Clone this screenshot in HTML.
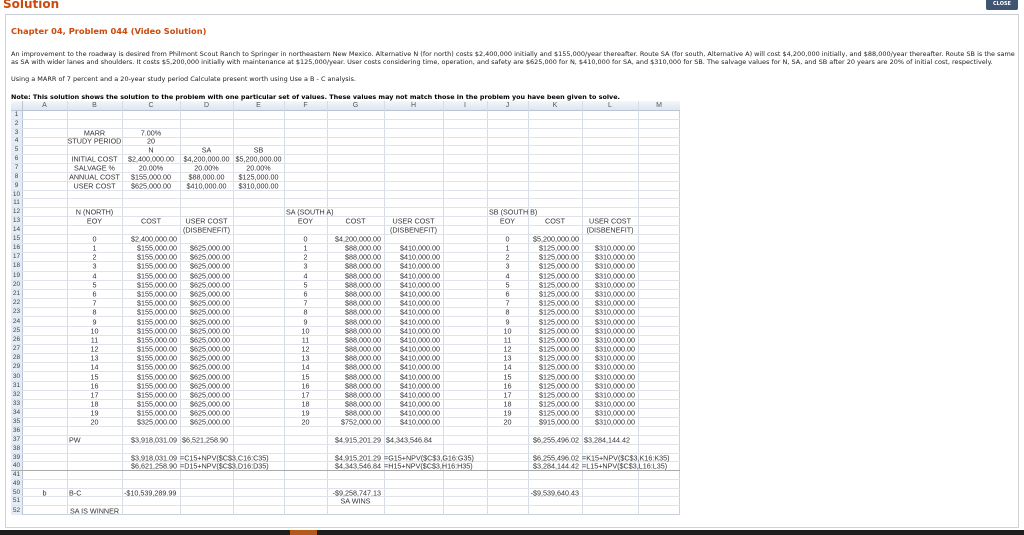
<!DOCTYPE html>
<html><head><meta charset="utf-8"><style>
*{margin:0;padding:0;box-sizing:border-box}
body{width:1024px;height:535px;overflow:hidden;background:#fff;position:relative;font-family:"Liberation Sans",Arial,sans-serif}
.sol{position:absolute;left:3px;top:-3px;font:bold 12px "DejaVu Sans",sans-serif;color:#cc4a0c}
.close{position:absolute;left:986px;top:0;width:32px;height:10px;background:#3f5672;border-radius:0 0 2px 2px;color:#fff;font:bold 5px "DejaVu Sans",sans-serif;text-align:center;line-height:9px}
.panel{position:absolute;left:5px;top:14px;width:1014px;height:514px;border:1px solid #cfd3d8;border-top:1px solid #c9ccd0}
.t{position:absolute;white-space:nowrap;font-family:"DejaVu Sans",Verdana,sans-serif;color:#222}
.h1{left:11px;top:26px;font-size:8.3px;font-weight:bold;color:#cc4a0c}
.p{font-size:6.5px;left:11px}
.note{left:11px;top:93px;font-size:6.4px;font-weight:bold;color:#000}
.bar{position:absolute;left:0;top:530px;width:1024px;height:5px;background:#1e1e1e}
.bar i{position:absolute;left:290px;top:0;width:27px;height:5px;background:#b35a18}
.grid{position:absolute;left:11px;top:101px;width:669px;height:414px;border:1px solid #c8d0dc}
.v{position:absolute;top:101px;height:414px;width:1px;background:#d6dce6}
.hdr{position:absolute;left:11px;top:101px;width:669px;height:10px;background:linear-gradient(#f3f6fa,#dfe6ef);border-bottom:1px solid #b9c4d4}
.rh{position:absolute;left:11px;top:111px;width:11px;height:404px;background:#e6edf6}
.row{position:absolute;left:11px;width:669px;border-bottom:1px solid #dfe3ea;font-size:7.2px;color:#333}
.row span{position:absolute;top:50%;transform:translateY(-50%);white-space:nowrap;line-height:1}
.n{left:0;width:11px;text-align:center;font-size:6.5px;color:#444}
.hdr span{position:absolute;top:1px;font-size:7px;color:#555;text-align:center}
.A{left:11px;width:45px}.B{left:56px;width:55px}.C{left:111px;width:58px}.D{left:169px;width:53px}
.E{left:222px;width:51px}.F{left:273px;width:43px}.G{left:316px;width:57px}.H{left:373px;width:59px}
.I{left:432px;width:44px}.J{left:476px;width:41px}.K{left:517px;width:54px}.L{left:571px;width:56px}.M{left:627px;width:42px}
.c{text-align:center}.r{text-align:right;padding-right:3px}.l{text-align:left;padding-left:2px}
</style></head><body>
<div class="sol">Solution</div>
<div class="close">CLOSE</div>
<div class="panel"></div>
<div class="t h1">Chapter 04, Problem 044 (Video Solution)</div>
<div class="t p" style="top:50px">An improvement to the roadway is desired from Philmont Scout Ranch to Springer in northeastern New Mexico. Alternative N (for north) costs $2,400,000 initially and $155,000/year thereafter. Route SA (for south, Alternative A) will cost $4,200,000 initially, and $88,000/year thereafter. Route SB is the same</div>
<div class="t p" style="top:58px">as SA with wider lanes and shoulders. It costs $5,200,000 initially with maintenance at $125,000/year. User costs considering time, operation, and safety are $625,000 for N, $410,000 for SA, and $310,000 for SB. The salvage values for N, SA, and SB after 20 years are 20% of initial cost, respectively.</div>
<div class="t p" style="top:75px">Using a MARR of 7 percent and a 20-year study period Calculate present worth using Use a B - C analysis.</div>
<div class="t note">Note: This solution shows the solution to the problem with one particular set of values. These values may not match those in the problem you have been given to solve.</div>

<div class="grid"></div>
<div class="rh"></div>
<div class="hdr"><span class="A">A</span><span class="B">B</span><span class="C">C</span><span class="D">D</span><span class="E">E</span><span class="F">F</span><span class="G">G</span><span class="H">H</span><span class="I">I</span><span class="J">J</span><span class="K">K</span><span class="L">L</span><span class="M">M</span></div>
<div class="v" style="left:22px;background:#b9c4d4"></div>
<div class="v" style="left:67px"></div><div class="v" style="left:122px"></div><div class="v" style="left:180px"></div><div class="v" style="left:233px"></div><div class="v" style="left:284px"></div><div class="v" style="left:327px"></div><div class="v" style="left:384px"></div><div class="v" style="left:443px"></div><div class="v" style="left:487px"></div><div class="v" style="left:528px"></div><div class="v" style="left:582px"></div><div class="v" style="left:638px"></div>

<div class="row" style="top:111px;height:8.85px"><span class="n">1</span></div>
<div class="row" style="top:119.85px;height:8.85px"><span class="n">2</span></div>
<div class="row" style="top:128.7px;height:8.85px"><span class="n">3</span><span class="B c">MARR</span><span class="C c">7.00%</span></div>
<div class="row" style="top:137.55px;height:8.85px"><span class="n">4</span><span class="B c">STUDY PERIOD</span><span class="C c">20</span></div>
<div class="row" style="top:146.4px;height:8.85px"><span class="n">5</span><span class="C c">N</span><span class="D c">SA</span><span class="E c">SB</span></div>
<div class="row" style="top:155.25px;height:8.85px"><span class="n">6</span><span class="B c">INITIAL COST</span><span class="C c">$2,400,000.00</span><span class="D c">$4,200,000.00</span><span class="E c">$5,200,000.00</span></div>
<div class="row" style="top:164.1px;height:8.85px"><span class="n">7</span><span class="B c">SALVAGE %</span><span class="C c">20.00%</span><span class="D c">20.00%</span><span class="E c">20.00%</span></div>
<div class="row" style="top:172.95px;height:8.85px"><span class="n">8</span><span class="B c">ANNUAL COST</span><span class="C c">$155,000.00</span><span class="D c">$88,000.00</span><span class="E c">$125,000.00</span></div>
<div class="row" style="top:181.8px;height:8.85px"><span class="n">9</span><span class="B c">USER COST</span><span class="C c">$625,000.00</span><span class="D c">$410,000.00</span><span class="E c">$310,000.00</span></div>
<div class="row" style="top:190.65px;height:8.85px"><span class="n">10</span></div>
<div class="row" style="top:199.5px;height:8.85px"><span class="n">11</span></div>
<div class="row" style="top:208.35px;height:8.85px"><span class="n">12</span><span class="B c">N (NORTH)</span><span class="F l">SA (SOUTH A)</span><span class="J l">SB (SOUTH B)</span></div>
<div class="row" style="top:217.2px;height:8.85px"><span class="n">13</span><span class="B c">EOY</span><span class="C c">COST</span><span class="D c">USER COST</span><span class="F c">EOY</span><span class="G c">COST</span><span class="H c">USER COST</span><span class="J c">EOY</span><span class="K c">COST</span><span class="L c">USER COST</span></div>
<div class="row" style="top:226.05px;height:8.85px"><span class="n">14</span><span class="D c">(DISBENEFIT)</span><span class="H c">(DISBENEFIT)</span><span class="L c">(DISBENEFIT)</span></div>
<div class="row" style="top:234.9px;height:9.17px"><span class="n">15</span><span class="B c">0</span><span class="C r">$2,400,000.00</span><span class="F c">0</span><span class="G r">$4,200,000.00</span><span class="J c">0</span><span class="K r">$5,200,000.00</span></div>
<div class="row" style="top:244.07px;height:9.17px"><span class="n">16</span><span class="B c">1</span><span class="C r">$155,000.00</span><span class="D r">$625,000.00</span><span class="F c">1</span><span class="G r">$88,000.00</span><span class="H r">$410,000.00</span><span class="J c">1</span><span class="K r">$125,000.00</span><span class="L r">$310,000.00</span></div>
<div class="row" style="top:253.24px;height:9.17px"><span class="n">17</span><span class="B c">2</span><span class="C r">$155,000.00</span><span class="D r">$625,000.00</span><span class="F c">2</span><span class="G r">$88,000.00</span><span class="H r">$410,000.00</span><span class="J c">2</span><span class="K r">$125,000.00</span><span class="L r">$310,000.00</span></div>
<div class="row" style="top:262.41px;height:9.17px"><span class="n">18</span><span class="B c">3</span><span class="C r">$155,000.00</span><span class="D r">$625,000.00</span><span class="F c">3</span><span class="G r">$88,000.00</span><span class="H r">$410,000.00</span><span class="J c">3</span><span class="K r">$125,000.00</span><span class="L r">$310,000.00</span></div>
<div class="row" style="top:271.58px;height:9.17px"><span class="n">19</span><span class="B c">4</span><span class="C r">$155,000.00</span><span class="D r">$625,000.00</span><span class="F c">4</span><span class="G r">$88,000.00</span><span class="H r">$410,000.00</span><span class="J c">4</span><span class="K r">$125,000.00</span><span class="L r">$310,000.00</span></div>
<div class="row" style="top:280.75px;height:9.17px"><span class="n">20</span><span class="B c">5</span><span class="C r">$155,000.00</span><span class="D r">$625,000.00</span><span class="F c">5</span><span class="G r">$88,000.00</span><span class="H r">$410,000.00</span><span class="J c">5</span><span class="K r">$125,000.00</span><span class="L r">$310,000.00</span></div>
<div class="row" style="top:289.92px;height:9.17px"><span class="n">21</span><span class="B c">6</span><span class="C r">$155,000.00</span><span class="D r">$625,000.00</span><span class="F c">6</span><span class="G r">$88,000.00</span><span class="H r">$410,000.00</span><span class="J c">6</span><span class="K r">$125,000.00</span><span class="L r">$310,000.00</span></div>
<div class="row" style="top:299.09px;height:9.17px"><span class="n">22</span><span class="B c">7</span><span class="C r">$155,000.00</span><span class="D r">$625,000.00</span><span class="F c">7</span><span class="G r">$88,000.00</span><span class="H r">$410,000.00</span><span class="J c">7</span><span class="K r">$125,000.00</span><span class="L r">$310,000.00</span></div>
<div class="row" style="top:308.26px;height:9.17px"><span class="n">23</span><span class="B c">8</span><span class="C r">$155,000.00</span><span class="D r">$625,000.00</span><span class="F c">8</span><span class="G r">$88,000.00</span><span class="H r">$410,000.00</span><span class="J c">8</span><span class="K r">$125,000.00</span><span class="L r">$310,000.00</span></div>
<div class="row" style="top:317.43px;height:9.17px"><span class="n">24</span><span class="B c">9</span><span class="C r">$155,000.00</span><span class="D r">$625,000.00</span><span class="F c">9</span><span class="G r">$88,000.00</span><span class="H r">$410,000.00</span><span class="J c">9</span><span class="K r">$125,000.00</span><span class="L r">$310,000.00</span></div>
<div class="row" style="top:326.6px;height:9.17px"><span class="n">25</span><span class="B c">10</span><span class="C r">$155,000.00</span><span class="D r">$625,000.00</span><span class="F c">10</span><span class="G r">$88,000.00</span><span class="H r">$410,000.00</span><span class="J c">10</span><span class="K r">$125,000.00</span><span class="L r">$310,000.00</span></div>
<div class="row" style="top:335.77px;height:9.17px"><span class="n">26</span><span class="B c">11</span><span class="C r">$155,000.00</span><span class="D r">$625,000.00</span><span class="F c">11</span><span class="G r">$88,000.00</span><span class="H r">$410,000.00</span><span class="J c">11</span><span class="K r">$125,000.00</span><span class="L r">$310,000.00</span></div>
<div class="row" style="top:344.94px;height:9.17px"><span class="n">27</span><span class="B c">12</span><span class="C r">$155,000.00</span><span class="D r">$625,000.00</span><span class="F c">12</span><span class="G r">$88,000.00</span><span class="H r">$410,000.00</span><span class="J c">12</span><span class="K r">$125,000.00</span><span class="L r">$310,000.00</span></div>
<div class="row" style="top:354.11px;height:9.17px"><span class="n">28</span><span class="B c">13</span><span class="C r">$155,000.00</span><span class="D r">$625,000.00</span><span class="F c">13</span><span class="G r">$88,000.00</span><span class="H r">$410,000.00</span><span class="J c">13</span><span class="K r">$125,000.00</span><span class="L r">$310,000.00</span></div>
<div class="row" style="top:363.28px;height:9.17px"><span class="n">29</span><span class="B c">14</span><span class="C r">$155,000.00</span><span class="D r">$625,000.00</span><span class="F c">14</span><span class="G r">$88,000.00</span><span class="H r">$410,000.00</span><span class="J c">14</span><span class="K r">$125,000.00</span><span class="L r">$310,000.00</span></div>
<div class="row" style="top:372.45px;height:9.17px"><span class="n">30</span><span class="B c">15</span><span class="C r">$155,000.00</span><span class="D r">$625,000.00</span><span class="F c">15</span><span class="G r">$88,000.00</span><span class="H r">$410,000.00</span><span class="J c">15</span><span class="K r">$125,000.00</span><span class="L r">$310,000.00</span></div>
<div class="row" style="top:381.62px;height:9.17px"><span class="n">31</span><span class="B c">16</span><span class="C r">$155,000.00</span><span class="D r">$625,000.00</span><span class="F c">16</span><span class="G r">$88,000.00</span><span class="H r">$410,000.00</span><span class="J c">16</span><span class="K r">$125,000.00</span><span class="L r">$310,000.00</span></div>
<div class="row" style="top:390.79px;height:9.17px"><span class="n">32</span><span class="B c">17</span><span class="C r">$155,000.00</span><span class="D r">$625,000.00</span><span class="F c">17</span><span class="G r">$88,000.00</span><span class="H r">$410,000.00</span><span class="J c">17</span><span class="K r">$125,000.00</span><span class="L r">$310,000.00</span></div>
<div class="row" style="top:399.96px;height:9.17px"><span class="n">33</span><span class="B c">18</span><span class="C r">$155,000.00</span><span class="D r">$625,000.00</span><span class="F c">18</span><span class="G r">$88,000.00</span><span class="H r">$410,000.00</span><span class="J c">18</span><span class="K r">$125,000.00</span><span class="L r">$310,000.00</span></div>
<div class="row" style="top:409.13px;height:9.17px"><span class="n">34</span><span class="B c">19</span><span class="C r">$155,000.00</span><span class="D r">$625,000.00</span><span class="F c">19</span><span class="G r">$88,000.00</span><span class="H r">$410,000.00</span><span class="J c">19</span><span class="K r">$125,000.00</span><span class="L r">$310,000.00</span></div>
<div class="row" style="top:418.3px;height:9.17px"><span class="n">35</span><span class="B c">20</span><span class="C r">$325,000.00</span><span class="D r">$625,000.00</span><span class="F c">20</span><span class="G r">$752,000.00</span><span class="H r">$410,000.00</span><span class="J c">20</span><span class="K r">$915,000.00</span><span class="L r">$310,000.00</span></div>
<div class="row" style="top:427.47px;height:8.75px"><span class="n">36</span></div>
<div class="row" style="top:436.22px;height:8.75px"><span class="n">37</span><span class="B l">PW</span><span class="C r">$3,918,031.09</span><span class="D l">$6,521,258.90</span><span class="G r">$4,915,201.29</span><span class="H l">$4,343,546.84</span><span class="K r">$6,255,496.02</span><span class="L l">$3,284,144.42</span></div>
<div class="row" style="top:444.97px;height:8.75px"><span class="n">38</span></div>
<div class="row" style="top:453.72px;height:8.75px"><span class="n">39</span><span class="C r">$3,918,031.09</span><span class="D l" style="padding-left:0">=C15+NPV($C$3,C16:C35)</span><span class="G r">$4,915,201.29</span><span class="H l" style="padding-left:0">=G15+NPV($C$3,G16:G35)</span><span class="K r">$6,255,496.02</span><span class="L l" style="padding-left:0">=K15+NPV($C$3,K16:K35)</span></div>
<div class="row" style="top:462.47px;height:8.75px;border-bottom-color:#aaa"><span class="n">40</span><span class="C r">$6,621,258.90</span><span class="D l" style="padding-left:0">=D15+NPV($C$3,D16:D35)</span><span class="G r">$4,343,546.84</span><span class="H l" style="padding-left:0">=H15+NPV($C$3,H16:H35)</span><span class="K r">$3,284,144.42</span><span class="L l" style="padding-left:0">=L15+NPV($C$3,L16:L35)</span></div>
<div class="row" style="top:471.22px;height:8.75px"><span class="n">41</span></div>
<div class="row" style="top:479.97px;height:8.75px"><span class="n">49</span></div>
<div class="row" style="top:488.72px;height:8.75px"><span class="n">50</span><span class="A c">b</span><span class="B l">B-C</span><span class="C l">-$10,539,289.99</span><span class="G r">-$9,258,747.13</span><span class="K r">-$9,539,640.43</span></div>
<div class="row" style="top:497.47px;height:8.75px"><span class="n">51</span><span class="G c">SA WINS</span></div>
<div class="row" style="top:506.22px;height:8.78px;border-bottom:none"><span class="n">52</span><span class="B c">SA IS WINNER</span></div>

<div class="bar"><i></i></div>
</body></html>
